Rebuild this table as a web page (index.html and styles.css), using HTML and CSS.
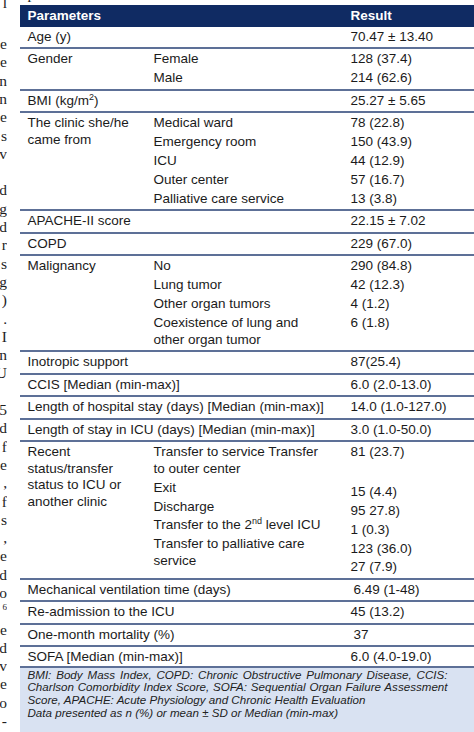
FILE: index.html
```html
<!DOCTYPE html>
<html lang="en">
<head>
<meta charset="utf-8">
<title>Patient characteristics</title>
<link rel="stylesheet" href="styles.css">
</head>
<body>
<div class="page">
  <div class="margin-text">
    <div class="mline top">l</div>
    <div class="mline para">e</div>
    <div class="mline">e</div>
    <div class="mline">n</div>
    <div class="mline">n</div>
    <div class="mline">e</div>
    <div class="mline">s</div>
    <div class="mline">v</div>
    <div class="mline">&nbsp;</div>
    <div class="mline">d</div>
    <div class="mline">g</div>
    <div class="mline">d</div>
    <div class="mline">r</div>
    <div class="mline">s</div>
    <div class="mline">g</div>
    <div class="mline">)</div>
    <div class="mline">.</div>
    <div class="mline">I</div>
    <div class="mline">n</div>
    <div class="mline">U</div>
    <div class="mline">&nbsp;</div>
    <div class="mline">5</div>
    <div class="mline">d</div>
    <div class="mline">f</div>
    <div class="mline">e</div>
    <div class="mline">,</div>
    <div class="mline">f</div>
    <div class="mline">s</div>
    <div class="mline">,</div>
    <div class="mline">e</div>
    <div class="mline">d</div>
    <div class="mline">o</div>
    <div class="mline"><sup>6</sup></div>
    <div class="mline">e</div>
    <div class="mline">d</div>
    <div class="mline">v</div>
    <div class="mline">e</div>
    <div class="mline">o</div>
    <div class="mline">-</div>
  </div>

  <div class="table">
    <div class="caption"><span>p</span></div>
    <div class="head">
      <div class="c1">Parameters</div>
      <div class="c2"></div>
      <div class="c3">Result</div>
    </div>

    <div class="row">
      <div class="span2">Age (y)</div>
      <div class="c3">70.47 ± 13.40</div>
    </div>

    <div class="row">
      <div class="c1">Gender</div>
      <div class="c2 stack"><div>Female</div><div>Male</div></div>
      <div class="c3 stack"><div>128 (37.4)</div><div>214 (62.6)</div></div>
    </div>

    <div class="row">
      <div class="span2">BMI (kg/m<sup>2</sup>)</div>
      <div class="c3">25.27 ± 5.65</div>
    </div>

    <div class="row">
      <div class="c1">The clinic she/he came from</div>
      <div class="c2 stack">
        <div>Medical ward</div>
        <div>Emergency room</div>
        <div>ICU</div>
        <div>Outer center</div>
        <div>Palliative care service</div>
      </div>
      <div class="c3 stack">
        <div>78 (22.8)</div>
        <div>150 (43.9)</div>
        <div>44 (12.9)</div>
        <div>57 (16.7)</div>
        <div>13 (3.8)</div>
      </div>
    </div>

    <div class="row">
      <div class="span2">APACHE-II score</div>
      <div class="c3">22.15 ± 7.02</div>
    </div>

    <div class="row">
      <div class="span2">COPD</div>
      <div class="c3">229 (67.0)</div>
    </div>

    <div class="row">
      <div class="c1">Malignancy</div>
      <div class="c2 stack">
        <div>No</div>
        <div>Lung tumor</div>
        <div>Other organ tumors</div>
        <div>Coexistence of lung and other organ tumor</div>
      </div>
      <div class="c3 stack">
        <div>290 (84.8)</div>
        <div>42 (12.3)</div>
        <div>4 (1.2)</div>
        <div>6 (1.8)</div>
      </div>
    </div>

    <div class="row">
      <div class="span2">Inotropic support</div>
      <div class="c3">87(25.4)</div>
    </div>

    <div class="row">
      <div class="span2">CCIS [Median (min-max)]</div>
      <div class="c3">6.0 (2.0-13.0)</div>
    </div>

    <div class="row">
      <div class="span2">Length of hospital stay (days) [Median (min-max)]</div>
      <div class="c3">14.0 (1.0-127.0)</div>
    </div>

    <div class="row">
      <div class="span2">Length of stay in ICU (days) [Median (min-max)]</div>
      <div class="c3">3.0 (1.0-50.0)</div>
    </div>

    <div class="row">
      <div class="c1">Recent status/transfer status to ICU or another clinic</div>
      <div class="c2 stack">
        <div>Transfer to service Transfer to outer center</div>
        <div>Exit</div>
        <div>Discharge</div>
        <div>Transfer to the 2<sup>nd</sup> level ICU</div>
        <div>Transfer to palliative care service</div>
      </div>
      <div class="c3 stack">
        <div>81 (23.7)</div>
        <div class="after-wrap">15 (4.4)</div>
        <div>95 27.8)</div>
        <div>1 (0.3)</div>
        <div>123 (36.0)</div>
        <div>27 (7.9)</div>
      </div>
    </div>

    <div class="row">
      <div class="span2">Mechanical ventilation time (days)</div>
      <div class="c3 indent">6.49 (1-48)</div>
    </div>

    <div class="row">
      <div class="span2">Re-admission to the ICU</div>
      <div class="c3">45 (13.2)</div>
    </div>

    <div class="row">
      <div class="span2">One-month mortality (%)</div>
      <div class="c3 indent">37</div>
    </div>

    <div class="row last">
      <div class="span2">SOFA [Median (min-max)]</div>
      <div class="c3">6.0 (4.0-19.0)</div>
    </div>

    <div class="foot">
      BMI: Body Mass Index, COPD: Chronic Obstructive Pulmonary Disease, CCIS: Charlson Comorbidity Index Score, SOFA: Sequential Organ Failure Assessment Score, APACHE: Acute Physiology and Chronic Health Evaluation<br>
      Data presented as n (%) or mean ± SD or Median (min-max)
    </div>
  </div>
</div>
</body>
</html>
```

FILE: styles.css
```css
* {
  box-sizing: border-box;
}

html,
body {
  margin: 0;
  padding: 0;
  background: #ffffff;
}

body {
  width: 474px;
  height: 732px;
  overflow: hidden;
  font-family: "Liberation Sans", Arial, sans-serif;
  color: #1b1b1b;
}

.page {
  display: flex;
  align-items: stretch;
  gap: 12.5px;
  height: 732px;
  overflow: hidden;
}

/* clipped column of body text on the left */
.margin-text {
  flex: none;
  width: 7px;
  overflow: hidden;
  font-family: "Liberation Serif", "Times New Roman", serif;
  font-size: 15.5px;
  line-height: 18.3px;
  color: #1e1e1e;
}

.mline {
  width: 60px;
  height: 18.3px;
  margin-left: -53px;
  text-align: right;
  white-space: nowrap;
}

.mline.top {
  margin-top: -6.4px;
}

.mline.para {
  margin-top: 23.2px;
}

.mline sup {
  font-size: 9px;
  line-height: 0;
  vertical-align: 6px;
}

/* table */
.table {
  flex: 1;
  min-width: 0;
  display: flex;
  flex-direction: column;
  font-size: 13.5px;
}

.caption {
  flex: none;
  height: 5px;
  overflow: hidden;
  padding-left: 8px;
  font-family: "Liberation Serif", "Times New Roman", serif;
  font-size: 15.5px;
  line-height: 18.3px;
}

.caption span {
  display: block;
  margin-top: -15px;
}

.head {
  flex: none;
  display: grid;
  grid-template-columns: 126px 197px 1fr;
  height: 21.7px;
  line-height: 21.7px;
  background: #102b63;
  color: #ffffff;
  font-weight: bold;
}

.row {
  flex: none;
  display: grid;
  grid-template-columns: 126px 197px 1fr;
  padding: 2px 0 1.8px;
  border-bottom: 2px solid #5d7097;
  line-height: 16.7px;
}

.row.last {
  padding-bottom: 0;
}

.c1,
.c2,
.c3,
.span2 {
  padding-left: 8px;
}

.c2 {
  padding-right: 15px;
}

.span2 {
  grid-column: 1 / 3;
}

.stack {
  display: flex;
  flex-direction: column;
  gap: 2.2px;
}

.after-wrap {
  margin-top: 21px;
}

.indent {
  padding-left: 11px;
}

.row sup {
  font-size: 9px;
  line-height: 0;
  vertical-align: 5px;
}

.foot {
  flex: 1;
  background: #d9e2f2;
  padding: 0.5px 26.5px 0 8px;
  font-style: italic;
  font-size: 11.6px;
  line-height: 12.8px;
  text-align: justify;
  color: #222222;
}
```
